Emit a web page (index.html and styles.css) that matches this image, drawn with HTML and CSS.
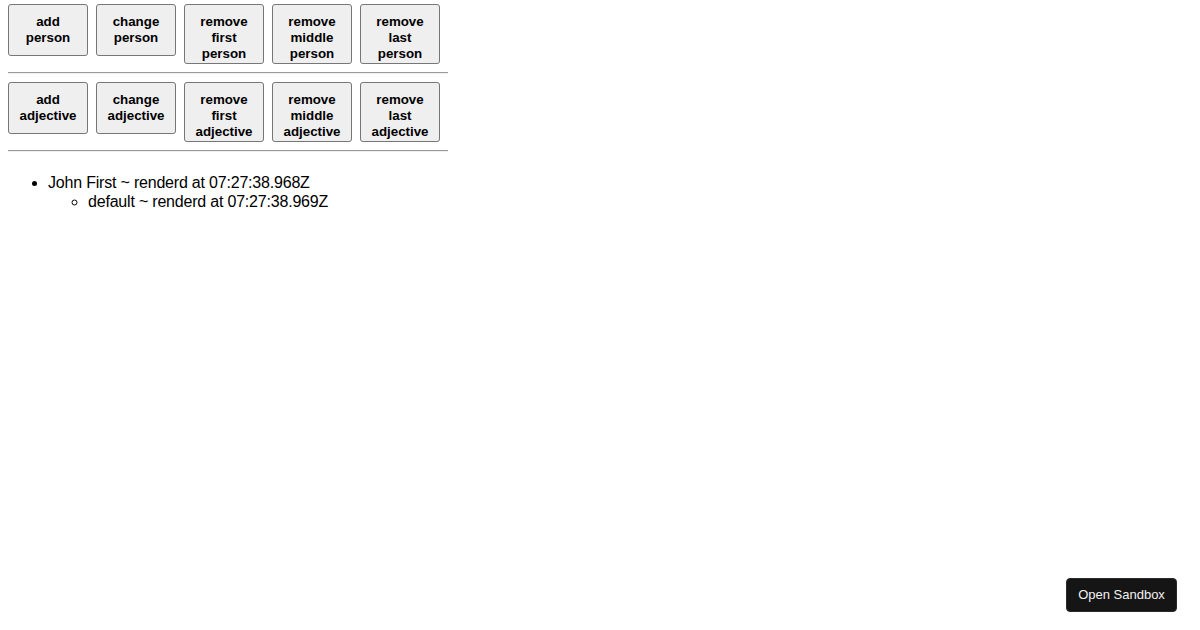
FILE: index.html
```html
<!DOCTYPE html>
<html>
<head>
<meta charset="utf-8">
<link rel="stylesheet" href="styles.css">
</head>
<body>
<div class="app">
  <div class="controls">
    <div class="row">
      <button class="btn">add<br>person</button>
      <button class="btn">change<br>person</button>
      <button class="btn">remove<br>first<br>person</button>
      <button class="btn">remove<br>middle<br>person</button>
      <button class="btn">remove<br>last<br>person</button>
    </div>
    <hr class="sep">
    <div class="row">
      <button class="btn">add<br>adjective</button>
      <button class="btn">change<br>adjective</button>
      <button class="btn">remove<br>first<br>adjective</button>
      <button class="btn">remove<br>middle<br>adjective</button>
      <button class="btn">remove<br>last<br>adjective</button>
    </div>
    <hr class="sep">
  </div>
  <ul class="people">
    <li>John First ~ renderd at 07:27:38.968Z
      <ul class="adjectives">
        <li>default ~ renderd at 07:27:38.969Z</li>
      </ul>
    </li>
  </ul>
</div>
<a class="open-sandbox">Open Sandbox</a>
</body>
</html>
```

FILE: styles.css
```css
html, body {
  margin: 0;
  padding: 0;
  background: #ffffff;
}
body {
  font-family: "Liberation Sans", Arial, sans-serif;
  color: #000;
}
.app {
  padding: 4px 8px 0 8px;
}
.controls {
  width: 440px;
}
.row {
  display: flex;
  align-items: flex-start;
  gap: 8px;
}
.btn {
  display: inline-flex;
  flex-direction: column;
  justify-content: flex-start;
  align-items: center;
  box-sizing: border-box;
  width: 80px;
  min-height: 52px;
  margin: 0;
  padding: 9px 2px 1px;
  font-family: "Liberation Sans", Arial, sans-serif;
  font-size: 13.33px;
  font-weight: bold;
  line-height: 16px;
  text-align: center;
  color: #000;
  background: #efefef;
  border: 1px solid #767676;
  border-radius: 3px;
}
.sep {
  margin: 8px 0;
  height: 0;
  border: 0;
  border-top: 1px solid #9a9a9a;
  border-bottom: 1px solid #eeeeee;
}
.people {
  margin: 21px 0 0 0;
  padding-left: 40px;
  font-size: 16px;
  line-height: 19px;
  letter-spacing: -0.2px;
  list-style: disc;
}
.adjectives {
  margin: 0;
  padding-left: 40px;
  list-style: circle;
}
.open-sandbox {
  position: fixed;
  right: 23px;
  bottom: 18px;
  box-sizing: border-box;
  width: 111px;
  height: 34px;
  padding-bottom: 2px;
  display: flex;
  align-items: center;
  justify-content: center;
  background: #151515;
  color: #f2f2f2;
  font-family: "Liberation Sans", Arial, sans-serif;
  font-size: 13px;
  border-radius: 4px;
  border: 1px solid #2a2a2a;
}
```
